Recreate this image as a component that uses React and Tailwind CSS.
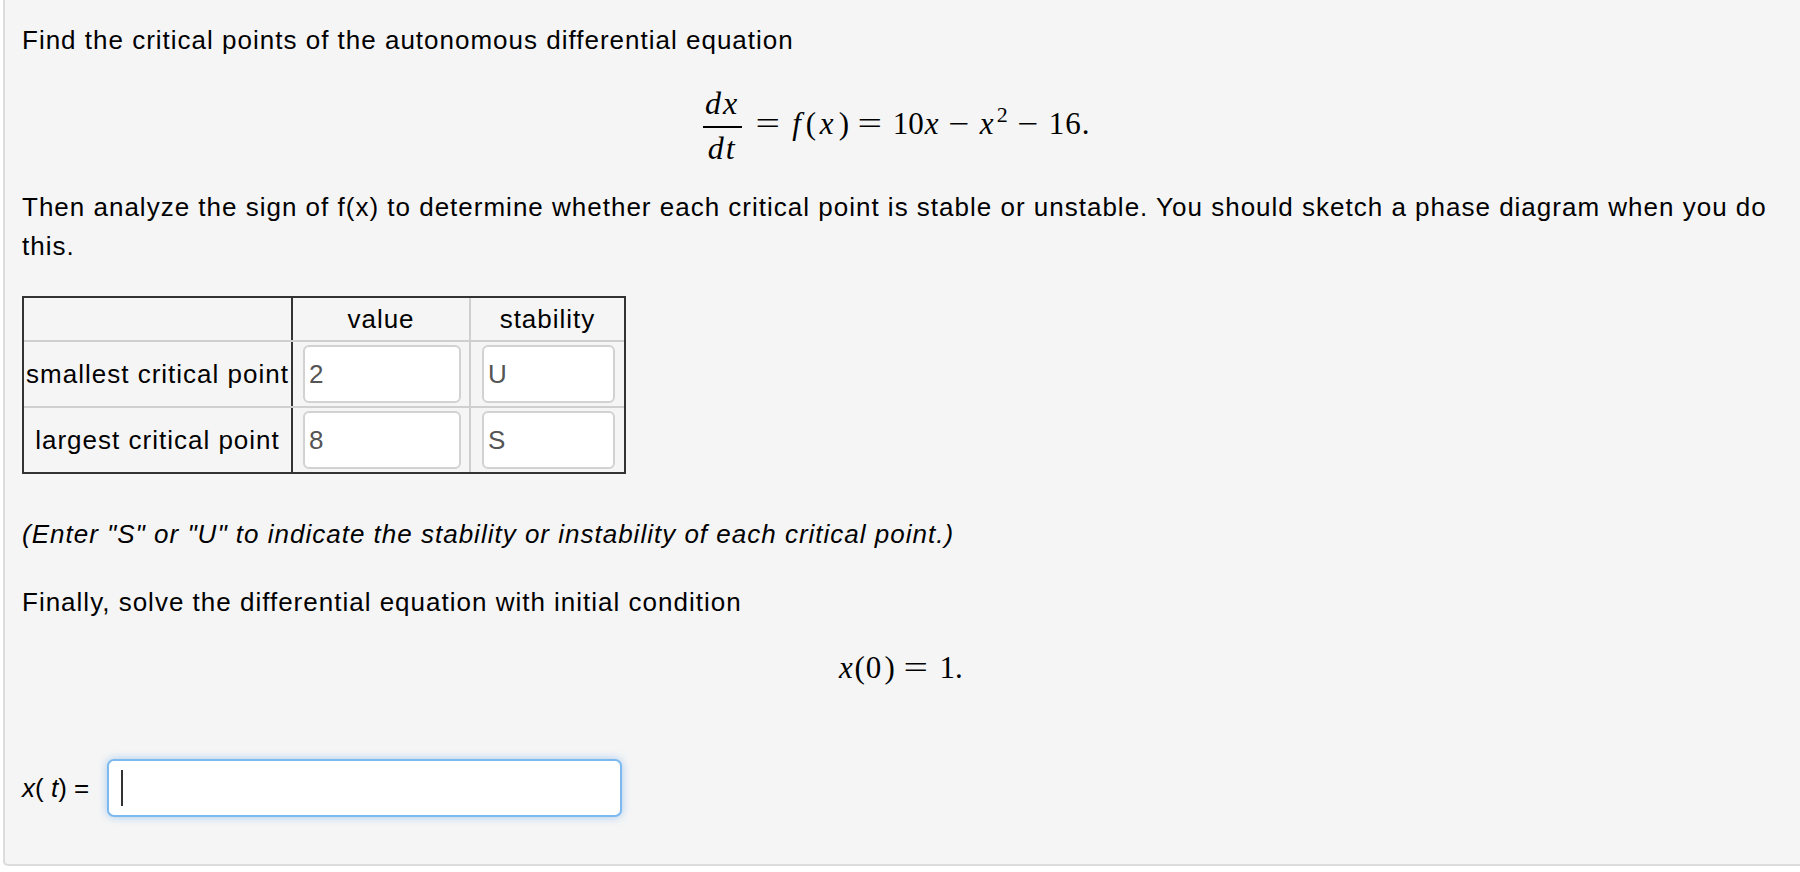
const sans = { fontFamily: '"Liberation Sans", Arial, Helvetica, sans-serif' };
const serif = { fontFamily: '"Liberation Serif", "Times New Roman", serif' };

// Small text box, looks like a filled answer blank
const Blank = ({ value, width }) => (
  <div
    className={`flex h-[58px] items-center rounded-[6px] border-2 border-[#d2d2d2] bg-white pl-[4px] text-[#555] ${width}`}
  >
    {value}
  </div>
);

// one glyph of the typeset math, in a box of fixed width
const G = ({ w, children, italic }) => (
  <span className={`inline-block text-center ${w} ${italic ? "italic" : ""}`}>{children}</span>
);

// relation / operator glyphs are drawn wider in the reference math font
const Eq = ({ w }) => (
  <span className={`inline-block text-center ${w}`}>
    <span className="inline-block scale-x-[1.4]">=</span>
  </span>
);
const Minus = ({ w }) => (
  <span className={`inline-block text-center ${w}`}>
    <span className="inline-block scale-x-[1.2]">−</span>
  </span>
);

const Fraction = () => (
  <div className="flex w-[39px] flex-col items-center">
    <span className="text-[32px] leading-[30px] tracking-[2px] italic">dx</span>
    <span className="mt-[8px] h-[2px] w-[39px] bg-black" />
    <span className="mt-[5px] text-[32px] leading-[30px] tracking-[2px] italic">dt</span>
  </div>
);

export default function App() {
  return (
    <div className="min-h-screen bg-white text-black" style={sans}>
      <div className="ml-[3px] h-[866px] rounded-bl-[5px] border-b-2 border-l-2 border-[#dcdcdc] bg-[#f5f5f5] pl-[17px] pr-[22px] pt-[21px] text-[26px] tracking-[1px]">
        <p className="leading-[39px]">
          Find the critical points of the autonomous differential equation
        </p>

        {/* displayed equation */}
        <div className="mt-[28px] flex items-start justify-center tracking-normal" style={serif}>
          <Fraction />
          <div className="mt-[21px] flex items-start text-[31px] leading-[30px] whitespace-nowrap">
            <Eq w="ml-[13px] w-[26px]" />
            <G w="ml-[7px] w-[18px]" italic>f</G>
            <G w="w-[9px]">(</G>
            <G w="w-[24px]" italic>x</G>
            <G w="w-[10px]">)</G>
            <Eq w="ml-[8px] w-[27px]" />
            <span className="ml-[9px] inline-block w-[30px]">10</span>
            <G w="w-[18px]" italic>x</G>
            <Minus w="ml-[6px] w-[24px]" />
            <G w="ml-[6px] w-[20px]" italic>x</G>
            <span className="-mt-[5px] inline-block w-[13px] text-[22px] leading-[22px]">2</span>
            <Minus w="ml-[6px] w-[24px]" />
            <span className="ml-[9px] inline-block pr-[7px] tracking-[1px]">16.</span>
          </div>
        </div>

        <p className="mt-[25px] leading-[39px]">
          Then analyze the sign of f(x) to determine whether each critical point is stable or unstable. You should sketch a phase diagram when you do this.
        </p>

        {/* answer table */}
        <div className="mt-[30px] w-[604px] border-2 border-[#333]">
          <div className="flex h-[44px] border-b-2 border-[#cfcfcf]">
            <div className="w-[269px] border-r-2 border-[#333]" />
            <div className="flex w-[178px] items-center justify-center border-r-2 border-[#cfcfcf]">value</div>
            <div className="flex flex-1 items-center justify-center">stability</div>
          </div>
          <div className="flex h-[66px] border-b-2 border-[#cfcfcf]">
            <div className="flex w-[269px] items-center justify-center border-r-2 border-[#333] whitespace-nowrap">
              smallest critical point
            </div>
            <div className="flex w-[178px] items-center border-r-2 border-[#cfcfcf] pl-[10px]">
              <Blank value="2" width="w-[158px]" />
            </div>
            <div className="flex flex-1 items-center pl-[11px]">
              <Blank value="U" width="w-[133px]" />
            </div>
          </div>
          <div className="flex h-[64px]">
            <div className="flex w-[269px] items-center justify-center border-r-2 border-[#333] whitespace-nowrap">
              largest critical point
            </div>
            <div className="flex w-[178px] items-center border-r-2 border-[#cfcfcf] pl-[10px]">
              <Blank value="8" width="w-[158px]" />
            </div>
            <div className="flex flex-1 items-center pl-[11px]">
              <Blank value="S" width="w-[133px]" />
            </div>
          </div>
        </div>

        <p className="mt-[41px] leading-[39px] italic">
          (Enter "S" or "U" to indicate the stability or instability of each critical point.)
        </p>

        <p className="mt-[29px] leading-[39px]">
          Finally, solve the differential equation with initial condition
        </p>

        <div className="mt-[31px] flex justify-center text-[31px] leading-[30px] tracking-normal" style={serif}>
          <G w="w-[17px]" italic>x</G>
          <G w="w-[8px]">(</G>
          <G w="w-[22px]">0</G>
          <G w="w-[10px]">)</G>
          <Eq w="ml-[8px] w-[27px]" />
          <span className="ml-[10px] inline-block">1.</span>
        </div>

        <div className="mt-[76px] flex items-center">
          <span className="whitespace-nowrap tracking-normal">
            <span className="italic">x</span>( <span className="italic">t</span>) =
          </span>
          <div className="ml-[18px] flex h-[58px] w-[515px] items-center rounded-[7px] border-2 border-[#7db8ee] bg-white pl-[12px] shadow-[0_0_9px_rgba(96,165,235,0.55)]">
            <span className="h-[36px] w-[2px] bg-[#333]" />
          </div>
        </div>
      </div>
    </div>
  );
}
